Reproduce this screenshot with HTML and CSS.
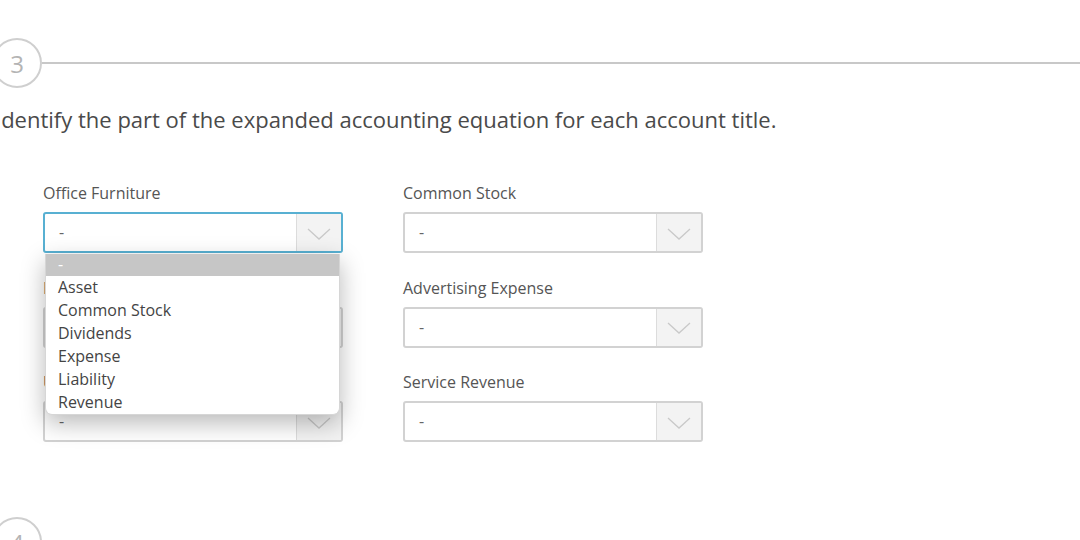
FILE: index.html
```html
<!DOCTYPE html>
<html>
<head>
<meta charset="utf-8">
<link rel="stylesheet" href="styles.css">
</head>
<body>
<div class="page">
  <div class="step-head">
    <div class="step-num">3</div>
    <div class="step-line"></div>
  </div>
  <p class="prompt">Identify the part of the expanded accounting equation for each account title.</p>
  <div class="fields">
    <div class="field">
      <div class="label">Office Furniture</div>
      <div class="select focused">
        <span class="value">-</span>
        <span class="arrow"><svg width="24" height="12" viewBox="0 0 24 12"><path d="M1 1 L12 11 L23 1" fill="none" stroke="#c9c9c9" stroke-width="1.3"/></svg></span>
      </div>
      <ul class="menu">
        <li class="hl">-</li>
        <li>Asset</li>
        <li>Common Stock</li>
        <li>Dividends</li>
        <li>Expense</li>
        <li>Liability</li>
        <li>Revenue</li>
      </ul>
    </div>
    <div class="field">
      <div class="label">Common Stock</div>
      <div class="select">
        <span class="value">-</span>
        <span class="arrow"><svg width="24" height="12" viewBox="0 0 24 12"><path d="M1 1 L12 11 L23 1" fill="none" stroke="#c9c9c9" stroke-width="1.3"/></svg></span>
      </div>
    </div>
    <div class="field">
      <div class="label">Dividends</div>
      <div class="select">
        <span class="value">-</span>
        <span class="arrow"><svg width="24" height="12" viewBox="0 0 24 12"><path d="M1 1 L12 11 L23 1" fill="none" stroke="#c9c9c9" stroke-width="1.3"/></svg></span>
      </div>
    </div>
    <div class="field">
      <div class="label">Advertising Expense</div>
      <div class="select">
        <span class="value">-</span>
        <span class="arrow"><svg width="24" height="12" viewBox="0 0 24 12"><path d="M1 1 L12 11 L23 1" fill="none" stroke="#c9c9c9" stroke-width="1.3"/></svg></span>
      </div>
    </div>
    <div class="field">
      <div class="label">Utilities Expense</div>
      <div class="select">
        <span class="value">-</span>
        <span class="arrow"><svg width="24" height="12" viewBox="0 0 24 12"><path d="M1 1 L12 11 L23 1" fill="none" stroke="#c9c9c9" stroke-width="1.3"/></svg></span>
      </div>
    </div>
    <div class="field">
      <div class="label">Service Revenue</div>
      <div class="select">
        <span class="value">-</span>
        <span class="arrow"><svg width="24" height="12" viewBox="0 0 24 12"><path d="M1 1 L12 11 L23 1" fill="none" stroke="#c9c9c9" stroke-width="1.3"/></svg></span>
      </div>
    </div>
  </div>
  <div class="step-head next">
    <div class="step-num">4</div>
  </div>
</div>
</body>
</html>
```

FILE: styles.css
```css
* { box-sizing: border-box; }
html, body { margin: 0; padding: 0; background: #fff; overflow: hidden; }
body {
  font-family: "Open Sans", "Noto Sans", sans-serif;
  color: #4a4a4a;
  width: 1080px;
  height: 540px;
}
.page {
  margin-left: -8px;
  padding-top: 38px;
}
.step-head {
  display: flex;
  align-items: center;
}
.step-num {
  width: 50px;
  height: 50px;
  border: 2px solid #cfcfcf;
  border-radius: 50%;
  display: flex;
  align-items: center;
  justify-content: center;
  font-size: 24px;
  color: #b4b4b4;
  flex: none;
}
.step-line {
  flex: 1;
  height: 2px;
  background: #c8c8c8;
}
.prompt {
  margin: 15px 0 0 3px;
  font-size: 22px;
  line-height: 32px;
  color: #4a4a4a;
}
.fields {
  margin: 48px 0 0 51px;
  display: grid;
  grid-template-columns: 300px 300px;
  column-gap: 60px;
  row-gap: 24.5px;
  width: 660px;
}
.field { position: relative; }
.label {
  font-size: 16px;
  line-height: 20px;
  color: #555;
  margin-bottom: 9px;
}
.select {
  height: 41px;
  border: 2px solid #d2d2d2;
  border-radius: 3px;
  display: flex;
  align-items: stretch;
  background: #fff;
}
.select.focused { border-color: #58b0d2; }
.value {
  flex: 1;
  padding-left: 14px;
  line-height: 37px;
  font-size: 16px;
  color: #666;
}
.arrow {
  width: 45px;
  flex: none;
  background: #f3f3f3;
  border-left: 1px solid #dcdcdc;
  display: flex;
  align-items: center;
  justify-content: center;
  padding-top: 2px;
}
.menu {
  position: absolute;
  left: 2px;
  top: 71px;
  width: 295px;
  margin: 0;
  padding: 0;
  list-style: none;
  background: #fff;
  border: 1px solid #d6d6d6;
  border-top: none;
  border-radius: 0 0 7px 7px;
  box-shadow: 0 8px 24px rgba(0,0,0,0.28);
  z-index: 5;
  overflow: hidden;
}
.menu li {
  height: 23px;
  line-height: 23px;
  padding-left: 12px;
  font-size: 16px;
  color: #444;
}
.menu li.hl {
  height: 22px;
  line-height: 20px;
  background: #c6c6c6;
  color: #fff;
}
.next { margin-top: 75px; }
```
